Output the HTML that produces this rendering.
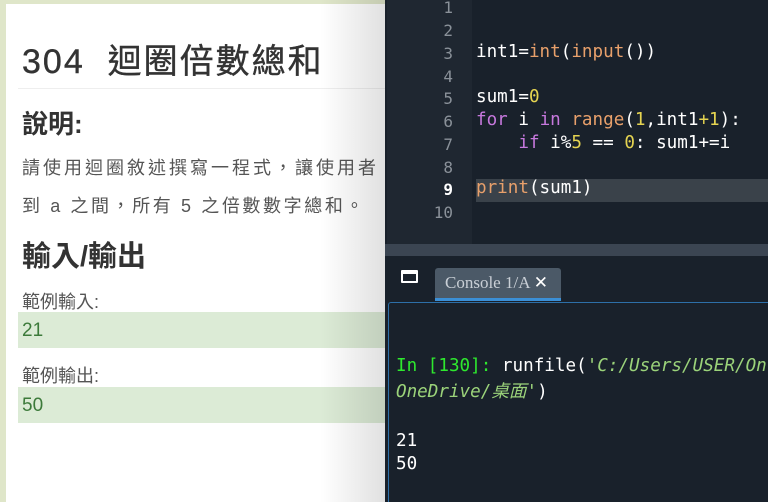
<!DOCTYPE html>
<html><head><meta charset="utf-8"><style>
*{margin:0;padding:0;box-sizing:border-box}
body{width:768px;height:502px;overflow:hidden;position:relative;background:#dfe6c9;font-family:"Liberation Sans","Noto Sans CJK TC",sans-serif}
.card{position:absolute;left:6px;top:4px;width:390px;height:498px;background:#fff}
.shade{position:absolute;left:320px;top:0;width:66px;height:502px;background:linear-gradient(90deg,rgba(0,0,0,0),rgba(0,0,0,0.12))}
.t{position:absolute;white-space:nowrap;color:#333}
.box{position:absolute;left:18px;width:368px;background:#dcebd6;color:#3c7a3a;font-size:19px;padding-left:4px}
.dark{position:absolute;left:385px;top:0;width:383px;height:502px;background:#19212b}
.mono{font-family:"DejaVu Sans Mono","Liberation Mono",monospace;font-size:17.6px}
.ln{position:absolute;left:0;width:68px;text-align:right;color:#8a9199;font-size:16px}
.code{position:absolute;left:91px;color:#fff;white-space:pre}
.k{color:#c678dd}.f{color:#e8a06b}.n{color:#e5d451}
</style></head><body>
<div class="card">
<div class="t" style="left:16px;top:30px;font-size:34px;color:#333;letter-spacing:2px;-webkit-text-stroke:0.4px #333">304&nbsp; 迴圈倍數總和</div>
<div style="position:absolute;left:12px;top:84px;width:380px;height:1px;background:#eee"></div>
<div class="t" style="left:16px;top:100px;font-size:26px;font-weight:bold">說明:</div>
<div class="t" style="left:16px;top:150px;font-size:18px;color:#555;letter-spacing:3px">請使用迴圈敘述撰寫一程式，讓使用者</div>
<div class="t" style="left:16px;top:188px;font-size:18px;color:#555;letter-spacing:2.6px">到 a 之間，所有 5 之倍數數字總和。</div>
<div class="t" style="left:16px;top:229px;font-size:29px;font-weight:bold">輸入/輸出</div>
<div class="t" style="left:16px;top:284px;font-size:18px;color:#555">範例輸入:</div>
<div class="t" style="left:16px;top:358px;font-size:18px;color:#555">範例輸出:</div>
</div>
<div class="box" style="top:312px;height:36px;line-height:38px">21</div>
<div class="box" style="top:387px;height:36px;line-height:38px">50</div>
<div class="shade"></div>
<div class="dark">
<div style="position:absolute;left:2px;top:0;width:85px;height:244px;background:#1f2731"></div>
<div style="position:absolute;left:91px;top:179px;width:292px;height:23px;background:#3a424a"></div>
<div class="mono">
<div class="ln" style="top:-2px">1</div><div class="ln" style="top:21px">2</div><div class="ln" style="top:44px">3</div><div class="ln" style="top:67px">4</div><div class="ln" style="top:89px">5</div><div class="ln" style="top:112px">6</div><div class="ln" style="top:135px">7</div><div class="ln" style="top:158px">8</div><div class="ln" style="top:180px;color:#fff;font-weight:bold">9</div><div class="ln" style="top:203px">10</div>
<div class="code" style="top:42px">int1=<span class="f">int</span>(<span class="f">input</span>())</div>
<div class="code" style="top:87px">sum1=<span class="n">0</span></div>
<div class="code" style="top:110px"><span class="k">for</span> i <span class="k">in</span> <span class="f">range</span>(<span class="n">1</span>,int1<span class="n">+1</span>):</div>
<div class="code" style="top:133px">    <span class="k">if</span> i%<span class="n">5</span> == <span class="n">0</span>: sum1+=i</div>
<div class="code" style="top:178px"><span class="f">print</span>(sum1)</div>
</div>
<div style="position:absolute;left:0;top:244px;width:383px;height:12px;background:#3b4552"></div>
<div style="position:absolute;left:16px;top:270px;width:17px;height:13px;border:2px solid #fff;border-top-width:4px;border-radius:1px"></div>
<div style="position:absolute;left:50px;top:268px;width:126px;height:33px;background:#4b5967;border-radius:3px 3px 0 0;border-bottom:3px solid #3b8fd6;color:#c9cfd6;font-family:'Liberation Serif',serif;font-size:17px;line-height:30px;padding-left:10px">Console 1/A <span style="font-family:'DejaVu Sans';color:#fff">✕</span></div>
<div style="position:absolute;left:3px;top:302px;width:380px;height:200px;border:1px solid #2d6fa8;border-right:none;border-bottom:none;border-radius:3px 0 0 0"></div>
<div class="mono" style="position:absolute;left:11px;top:353px;white-space:pre;color:#fff;line-height:26px"><span style="color:#2ee82e">In [130]:</span> runfile(<i style="color:#9bd37a">'C:/Users/USER/On</i>
<i style="color:#9bd37a">OneDrive/桌面'</i>)</div>
<div class="mono" style="position:absolute;left:11px;top:430px;color:#fff;line-height:23px">21<br>50</div>
</div>
</body></html>
